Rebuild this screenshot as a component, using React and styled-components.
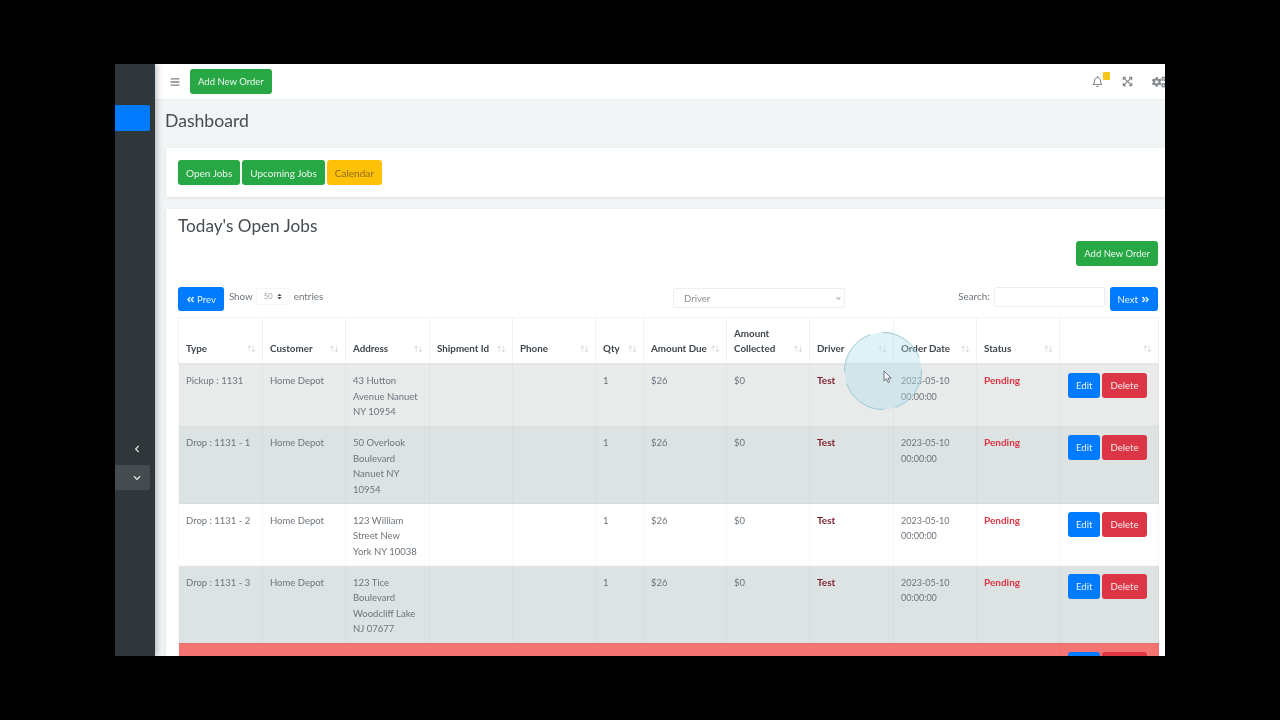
import styled, { createGlobalStyle } from 'styled-components'
import {
  FaAngleDoubleLeft,
  FaAngleDoubleRight,
  FaBars,
  FaChevronDown,
  FaChevronLeft,
  FaCogs,
  FaExpandArrowsAlt,
  FaRegBell,
  FaSort,
} from 'react-icons/fa'

const GlobalStyle = createGlobalStyle`
  html, body {
    margin: 0;
    height: 100%;
    background: #000;
    overflow: hidden;
    font-family: Lato, "Noto Sans", sans-serif;
  }
`

const Screen = styled.div`
  width: 1280px;
  height: 720px;
  box-sizing: border-box;
  padding: 64px 115px;
  background: #000;
`
const Frame = styled.div`
  position: relative;
  display: flex;
  width: 1050px;
  height: 592px;
  overflow: hidden;
  background: #f2f5f6;
  filter: blur(0.45px);
`
const Sidebar = styled.aside`
  flex: 0 0 40px;
  display: flex;
  flex-direction: column;
  background: #30373a;
  box-shadow: 2px 0 6px rgba(0, 0, 0, 0.25);
  z-index: 1;
`
const ActiveItem = styled.div`
  width: 35px;
  height: 26px;
  margin-top: 41px;
  background: #007bff;
  border-radius: 0 2px 2px 0;
`
const SideToggle = styled.div`
  width: 35px;
  height: 25px;
  display: flex;
  align-items: center;
  justify-content: flex-end;
  box-sizing: border-box;
  padding-right: 9px;
  color: #e4e7e8;
  font-size: 8px;
  border-radius: 0 2px 2px 0;
  background: ${(props) => (props.$open ? '#454c4f' : 'transparent')};
  margin-top: ${(props) => props.$top}px;
`
const Main = styled.main`
  flex: 1;
  min-width: 0;
  display: flex;
  flex-direction: column;
`
const Topbar = styled.header`
  flex: 0 0 36px;
  display: flex;
  align-items: center;
  gap: 10px;
  background: #fff;
  padding-left: 15px;
  color: #7b8287;
  border-bottom: 1px solid #eef0f2;
  box-sizing: border-box;
`
const TopIcons = styled.div`
  margin-left: auto;
  display: flex;
  align-items: center;
  gap: 19px;
  margin-right: -1px;
  font-size: 11px;
  color: #868c91;
`
const BellWrap = styled.span`
  position: relative;
  display: flex;
`
const Badge = styled.span`
  position: absolute;
  top: -4px;
  right: -7px;
  width: 7px;
  height: 8px;
  background: #f5c518;
  border-radius: 1px;
`
const Button = styled.button`
  height: ${(props) => props.$h || 25}px;
  padding: 0 8px;
  border: 0;
  border-radius: 3px;
  font: 400 ${(props) => props.$size || 9.6}px Lato, "Noto Sans", sans-serif;
  color: ${(props) => (props.$kind === 'warning' ? '#8a6a1a' : 'rgba(255,255,255,.9)')};
  background: ${(props) =>
    ({ success: '#28a745', primary: '#007bff', danger: '#dc3545', warning: '#ffc107' })[props.$kind]};
  display: inline-flex;
  align-items: center;
  gap: ${(props) => props.$gap || 2}px;
  white-space: nowrap;
`
const Content = styled.div`
  flex: 1;
  padding: 0 0 0 11px;
  min-height: 0;
`
const PageTitle = styled.h1`
  margin: 0 0 0 -1px;
  height: 48px;
  display: flex;
  align-items: center;
  font-size: 17.6px;
  font-weight: 400;
  color: #454c52;
  box-sizing: border-box;
  padding-bottom: 8px;
`
const Card = styled.section`
  background: #fff;
  box-shadow: 0 1px 3px rgba(0, 0, 0, 0.1);
  padding: ${(props) => props.$pad};
  margin-bottom: 12px;
`
const ButtonRow = styled.div`
  display: flex;
  gap: 2px;
`
const CardTitle = styled.h2`
  margin: 0;
  height: 32px;
  font-size: 17.2px;
  font-weight: 400;
  color: #454c52;
  display: flex;
  align-items: center;
`
const RightAction = styled.div`
  display: flex;
  justify-content: flex-end;
  height: 46px;
`
const Controls = styled.div`
  display: grid;
  grid-template-columns: 495px 172px 1fr;
  height: 30px;
`
const LeftControls = styled.div`
  display: flex;
  align-items: flex-start;
  gap: 5px;
  font-size: 9.8px;
  color: #6c757d;
`
const ControlText = styled.span`
  line-height: 18px;
`
const LengthSelect = styled.span`
  width: 34px;
  height: 17px;
  margin: 1px -1px 0 -2px;
  box-sizing: border-box;
  padding: 0 6px 0 7px;
  border: 1px solid #f4f5f6;
  border-radius: 2px;
  display: flex;
  align-items: center;
  justify-content: space-between;
  font-size: 7.5px;
  color: #9aa0a5;
  svg {
    color: #4f5559;
  }
`
const DriverSelect = styled.div`
  height: 20px;
  margin-top: 1px;
  box-sizing: border-box;
  border: 1px solid #eceef0;
  border-radius: 2px;
  padding: 0 3px 0 10px;
  display: flex;
  align-items: center;
  justify-content: space-between;
  font-size: 9.6px;
  color: #8a9095;
`
const RightControls = styled.div`
  display: flex;
  align-items: flex-start;
  justify-content: flex-end;
  font-size: 9.8px;
  color: #6c757d;
`
const SearchBox = styled.span`
  width: 111px;
  height: 20px;
  margin: 0 5px 0 4px;
  box-sizing: border-box;
  border: 1px solid #eceef0;
  border-radius: 2px;
`
const Table = styled.table`
  width: 980px;
  table-layout: fixed;
  border-collapse: collapse;
  font-size: 9.5px;
  line-height: 15.5px;
  color: #6c757d;
`
const HeadCell = styled.th`
  position: relative;
  height: 46px;
  box-sizing: border-box;
  padding: 0 7px 6px;
  vertical-align: bottom;
  text-align: left;
  font-size: 9.8px;
  font-weight: 700;
  color: #3f464c;
  border: 1px solid #eff1f2;
  border-bottom: 2px solid #e3e6e8;
`
const SortMark = styled.span`
  position: absolute;
  right: 7px;
  bottom: 6px;
  font-weight: 400;
  font-size: 7px;
  letter-spacing: -1px;
  color: #cdd1d4;
`
const Row = styled.tr`
  background: ${(props) => props.$bg};
`
const Cell = styled.td`
  box-sizing: border-box;
  padding: 8.5px 10px 6px 7px;
  vertical-align: top;
  border: 1px solid rgba(0, 0, 0, 0.025);
  color: ${(props) => props.$color || 'inherit'};
  font-weight: ${(props) => (props.$bold ? 700 : 400)};
  font-size: ${(props) => props.$size || 9.5}px;
`
const Actions = styled.div`
  display: flex;
  gap: 2px;
  margin: -0.5px -10px 0 1px;
`
const Ripple = styled.svg`
  position: absolute;
  left: 728px;
  top: 267px;
  pointer-events: none;
`

const widths = [84, 83, 84, 83, 83, 48, 83, 83, 84, 83, 83, 99]
const headers = ['Type', 'Customer', 'Address', 'Shipment Id', 'Phone', 'Qty', 'Amount Due', 'Amount Collected', 'Driver', 'Order Date', 'Status', '']
const rows = [
  { type: 'Pickup : 1131', address: '43 Hutton Avenue Nanuet NY 10954', bg: '#e9eaea' },
  { type: 'Drop : 1131 - 1', address: '50 Overlook Boulevard Nanuet NY 10954', bg: '#dde2e3' },
  { type: 'Drop : 1131 - 2', address: '123 William Street New York NY 10038', bg: '#ffffff' },
  { type: 'Drop : 1131 - 3', address: '123 Tice Boulevard Woodcliff Lake NJ 07677', bg: '#dde2e3' },
]

const App = () => {
  return (
    <Screen>
      <GlobalStyle />
      <Frame>
        <Sidebar>
          <ActiveItem />
          <SideToggle $top={305}>
            <FaChevronLeft />
          </SideToggle>
          <SideToggle
            $open
            $top={4}>
            <FaChevronDown />
          </SideToggle>
        </Sidebar>
        <Main>
          <Topbar>
            <FaBars size={10} />
            <Button
              $kind="success"
              $size={9.5}>
              Add New Order
            </Button>
            <TopIcons>
              <BellWrap>
                <FaRegBell />
                <Badge />
              </BellWrap>
              <FaExpandArrowsAlt />
              <FaCogs size={14} />
            </TopIcons>
          </Topbar>
          <Content>
            <PageTitle>Dashboard</PageTitle>
            <Card $pad="12px">
              <ButtonRow>
                <Button
                  $kind="success"
                  $size={10}>
                  Open Jobs
                </Button>
                <Button
                  $kind="success"
                  $size={10}>
                  Upcoming Jobs
                </Button>
                <Button
                  $kind="warning"
                  $size={10}>
                  Calendar
                </Button>
              </ButtonRow>
            </Card>
            <Card $pad="0 7px 12px 12px">
              <CardTitle>Today's Open Jobs</CardTitle>
              <RightAction>
                <Button
                  $kind="success"
                  $size={9.5}>
                  Add New Order
                </Button>
              </RightAction>
              <Controls>
                <LeftControls>
                  <Button
                    $kind="primary"
                    $h={24}>
                    <FaAngleDoubleLeft size={9} /> Prev
                  </Button>
                  <ControlText>Show</ControlText>
                  <LengthSelect>
                    50
                    <FaSort size={7} />
                  </LengthSelect>
                  <ControlText>entries</ControlText>
                </LeftControls>
                <DriverSelect>
                  Driver
                  <FaChevronDown size={5} />
                </DriverSelect>
                <RightControls>
                  <ControlText>Search:</ControlText>
                  <SearchBox />
                  <Button
                    $kind="primary"
                    $h={24}
                    $gap={3}>
                    Next <FaAngleDoubleRight size={9} />
                  </Button>
                </RightControls>
              </Controls>
              <Table>
                <colgroup>
                  {widths.map((w, i) => (
                    <col
                      key={i}
                      width={w}
                    />
                  ))}
                </colgroup>
                <thead>
                  <tr>
                    {headers.map((h) => (
                      <HeadCell key={h}>
                        {h}
                        <SortMark>↑↓</SortMark>
                      </HeadCell>
                    ))}
                  </tr>
                </thead>
                <tbody>
                  {rows.map((r) => (
                    <Row
                      key={r.type}
                      $bg={r.bg}>
                      <Cell>{r.type}</Cell>
                      <Cell>Home Depot</Cell>
                      <Cell>{r.address}</Cell>
                      <Cell />
                      <Cell />
                      <Cell>1</Cell>
                      <Cell>$26</Cell>
                      <Cell>$0</Cell>
                      <Cell
                        $bold
                        $size={10}
                        $color="#7d1f2c">
                        Test
                      </Cell>
                      <Cell $size={9}>2023-05-10 00:00:00</Cell>
                      <Cell
                        $bold
                        $size={10}
                        $color="#dc3545">
                        Pending
                      </Cell>
                      <Cell>
                        <Actions>
                          <Button $kind="primary">Edit</Button>
                          <Button $kind="danger">Delete</Button>
                        </Actions>
                      </Cell>
                    </Row>
                  ))}
                  <Row $bg="#f47474">
                    <Cell colSpan={11} />
                    <Cell>
                      <Actions>
                        <Button $kind="primary">Edit</Button>
                        <Button $kind="danger">Delete</Button>
                      </Actions>
                    </Cell>
                  </Row>
                </tbody>
              </Table>
            </Card>
          </Content>
        </Main>
        <Ripple
          width="80"
          height="80"
          viewBox="0 0 80 80">
          <circle
            cx="40"
            cy="40"
            r="38.5"
            fill="rgba(173,221,235,.38)"
            stroke="#9cc9d6"
            strokeWidth="1"
            strokeDasharray="48 12"
          />
          <path
            d="M41 40 v10 l2.4 -2.2 l1.6 3.6 l1.6 -.7 l-1.6 -3.5 h3.2 z"
            fill="#f4f6f7"
            stroke="#5f6b72"
            strokeWidth=".9"
          />
        </Ripple>
      </Frame>
    </Screen>
  )
}

export default App
